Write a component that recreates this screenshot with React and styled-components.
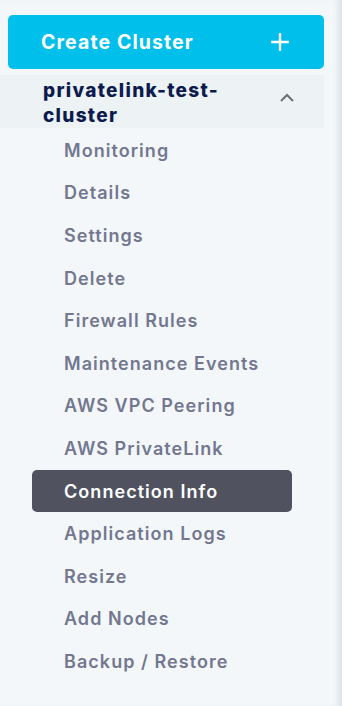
import React from "react";
import styled, { createGlobalStyle } from "styled-components";

const Global = createGlobalStyle`
  html, body { margin: 0; padding: 0; background: #f3f7fa; }
  * { box-sizing: border-box; }
`;

const Sidebar = styled.nav`
  position: relative;
  width: 342px;
  min-height: 706px;
  background: #f3f7fa;
  padding-top: 15px;
  display: flex;
  flex-direction: column;
  font-family: Inter, "Open Sans", sans-serif;
  box-shadow: inset -7px 0 6px -4px rgba(120, 130, 140, 0.22);
`;

const CreateButton = styled.button`
  width: 316px;
  height: 54px;
  margin-left: 8px;
  border: none;
  border-radius: 5px;
  background: #00bfeb;
  color: #ffffff;
  display: flex;
  align-items: center;
  justify-content: space-between;
  padding: 0 34px 0 33px;
  font-family: inherit;
  font-size: 19.5px;
  font-weight: 700;
  letter-spacing: 1.1px;
  cursor: pointer;
`;

const ClusterHeader = styled.div`
  margin-top: 6px;
  width: 324px;
  height: 53px;
  background: #edf2f4;
  display: flex;
  align-items: center;
  justify-content: space-between;
  padding: 0 29px 0 43px;
`;

const ClusterName = styled.div`
  color: #0c1a4f;
  font-size: 19px;
  font-weight: 800;
  line-height: 25px;
  letter-spacing: 1.3px;
  width: 200px;
  margin-top: 3px;
`;

const Chevron = styled.svg`
  margin-bottom: 8px;
`;

const Menu = styled.ul`
  list-style: none;
  margin: 0;
  padding: 1px 0 0 32px;
  display: flex;
  flex-direction: column;
`;

const Item = styled.li`
  width: 260px;
  height: 42.6px;
  display: flex;
  align-items: center;
  padding-left: 32px;
  border-radius: 5px;
  font-size: 18px;
  font-weight: 600;
  letter-spacing: 1.05px;
  color: ${(p) => (p.$active ? "#ffffff" : "#737790")};
  background: ${(p) => (p.$active ? "#50535f" : "transparent")};
`;

const PlusIcon = () => (
  <svg width="20" height="20" viewBox="0 0 20 20" fill="none">
    <path d="M10 1v18M1 10h18" stroke="#fff" strokeWidth="2.4" />
  </svg>
);

const ChevronUp = () => (
  <Chevron width="16" height="10" viewBox="0 0 16 10" fill="none">
    <path d="M2 8l6-6 6 6" stroke="#6d7074" strokeWidth="2" />
  </Chevron>
);

const items = [
  "Monitoring",
  "Details",
  "Settings",
  "Delete",
  "Firewall Rules",
  "Maintenance Events",
  "AWS VPC Peering",
  "AWS PrivateLink",
  "Connection Info",
  "Application Logs",
  "Resize",
  "Add Nodes",
  "Backup / Restore",
];

export default function App() {
  return (
    <>
      <Global />
      <Sidebar>
        <CreateButton>
          <span>Create Cluster</span>
          <PlusIcon />
        </CreateButton>
        <ClusterHeader>
          <ClusterName>privatelink-test-cluster</ClusterName>
          <ChevronUp />
        </ClusterHeader>
        <Menu>
          {items.map((it) => (
            <Item key={it} $active={it === "Connection Info"}>
              {it}
            </Item>
          ))}
        </Menu>
      </Sidebar>
    </>
  );
}
